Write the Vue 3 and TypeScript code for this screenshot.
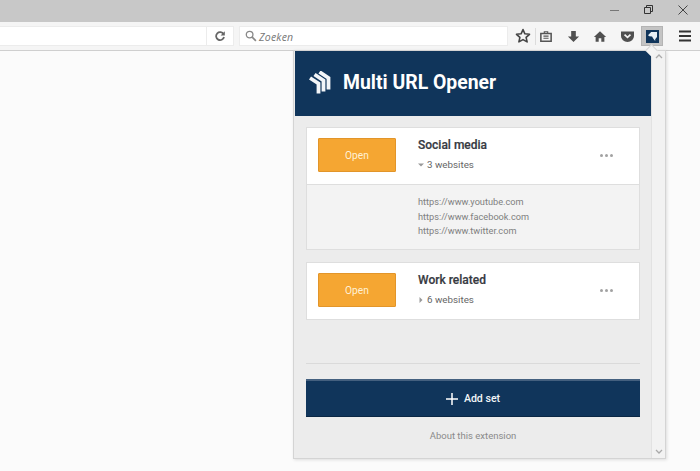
<script setup lang="ts">
interface UrlSet { name: string; count: number; open: boolean; urls: string[] }
const sets: UrlSet[] = [
  { name: 'Social media', count: 3, open: true, urls: ['https://www.youtube.com', 'https://www.facebook.com', 'https://www.twitter.com'] },
  { name: 'Work related', count: 6, open: false, urls: [] },
]
</script>

<template>
  <div class="window">
    <div class="titlebar">
      <svg class="win" width="12" height="12" viewBox="0 0 12 12"><path d="M1 6.500h9" stroke="#777" stroke-width="1" fill="none" /></svg>
      <svg class="win" width="12" height="12" viewBox="0 0 12 12"><path d="M1.500 3.500h6v6h-6zM3.500 3.500v-2h6v6h-2" stroke="#333" stroke-width="1" fill="none" /></svg>
      <svg class="win last" width="12" height="12" viewBox="0 0 12 12"><path d="M1.500 1.500l9 9M10.500 1.500l-9 9" stroke="#444" stroke-width="1" fill="none" /></svg>
    </div>
    <div class="toolbar">
      <div class="address">
        <span class="reload-box">
          <svg width="12" height="12" viewBox="0 0 12 12"><path d="M9.600 4.200A4 4 0 1 0 10 7" stroke="#666" stroke-width="1.800" fill="none" /><path d="M10.800 1.200v4.200H6.600z" fill="#666" /></svg>
        </span>
      </div>
      <div class="search">
        <svg width="12" height="12" viewBox="0 0 13 13"><circle cx="5" cy="5" r="3.600" stroke="#888" stroke-width="1.400" fill="none" /><path d="M7.800 7.800l4 4" stroke="#888" stroke-width="1.800" /></svg>
        <span class="placeholder">Zoeken</span>
      </div>
      <div class="tools">
        <svg class="star" width="16" height="16" viewBox="0 0 16 16"><path d="M8 1.600l1.900 4.200 4.600.5-3.400 3.100 1 4.500L8 11.600l-4.100 2.300 1-4.500L1.500 6.300l4.600-.5z" stroke="#444" stroke-width="1.600" fill="none" stroke-linejoin="round" /></svg>
        <span class="sep"></span>
        <svg class="clip" width="12" height="13" viewBox="0 0 14 14"><path d="M1 3.500h12v9H1z" stroke="#555" stroke-width="1.800" fill="none" /><path d="M5 3V1.500h4V3" stroke="#555" stroke-width="1.300" fill="none" /><path d="M4 6.500h6M4 9h6" stroke="#555" stroke-width="1.300" /></svg>
        <svg class="down" width="13" height="13" viewBox="0 0 14 14"><path d="M4.500 1h5v6h3.500L7 13 1 7h3.500z" fill="#505050" /></svg>
        <svg class="home" width="14" height="13" viewBox="0 0 16 14"><path d="M8 1L1 7.500h2V13h3.500V9h3v4H13V7.500h2z" fill="#505050" /></svg>
        <svg class="pocket" width="15" height="13" viewBox="0 0 16 14"><path d="M1 1.500h14v5a7 6.500 0 0 1-14 0z" fill="#505050" /><path d="M4.800 5L8 8l3.200-3" stroke="#f5f5f5" stroke-width="1.800" fill="none" /></svg>
        <span class="ext-btn">
          <span class="ext-icon">
            <svg width="9" height="9" viewBox="0 0 10 10"><path d="M0 3.500L3.500 0H10v5.500L8 8v2L6 7.500 4.500 5 1.500 4.800z" fill="#e8f0f6" /></svg>
          </span>
        </span>
        <svg class="menu" width="14" height="12" viewBox="0 0 14 12"><path d="M1 1.500h12M1 6h12M1 10.500h12" stroke="#333" stroke-width="2" /></svg>
      </div>
    </div>
    <div class="page"></div>

    <div class="popup">
      <span class="notch"></span>
      <div class="main">
        <header class="header">
          <svg class="logo" width="22" height="24" viewBox="0 0 22 24">
            <path d="M1 7L9.500 12.500V22.500" stroke="#f2f5f8" stroke-width="3.800" fill="none" />
            <path d="M5.500 3.500L14.500 9.500V20.500" stroke="#f2f5f8" stroke-width="3.800" fill="none" />
            <path d="M10.500 1L19.500 7V18.500" stroke="#f2f5f8" stroke-width="3.800" fill="none" />
          </svg>
          <h1>Multi URL Opener</h1>
        </header>
        <div class="body">
          <section v-for="set in sets" :key="set.name" class="card">
            <div class="card-head">
              <button class="open">Open</button>
              <div class="info">
                <div class="name">{{ set.name }}</div>
                <div class="count">
                  <svg width="6" height="6" viewBox="0 0 6 6">
                    <path v-if="set.open" d="M0 1.500h6L3 4.500z" fill="#999" />
                    <path v-else d="M1.500 0v6L4.500 3z" fill="#999" />
                  </svg>
                  <span>{{ set.count }} websites</span>
                </div>
              </div>
              <div class="dots"><i></i><i></i><i></i></div>
            </div>
            <div v-if="set.open" class="urls">
              <div v-for="u in set.urls" :key="u" class="url">{{ u }}</div>
            </div>
          </section>
          <div class="spacer"></div>
          <div class="rule"></div>
          <button class="add">
            <svg width="12" height="12" viewBox="0 0 12 12"><path d="M6 0v12M0 6h12" stroke="#fff" stroke-width="1.500" /></svg>
            <span>Add set</span>
          </button>
          <div class="about">About this extension</div>
        </div>
      </div>
      <div class="scrollbar">
        <svg width="8" height="5" viewBox="0 0 8 5"><path d="M1 4l3-3 3 3" stroke="#aaa" stroke-width="1.300" fill="none" /></svg>
        <svg width="8" height="5" viewBox="0 0 8 5"><path d="M1 1l3 3 3-3" stroke="#aaa" stroke-width="1.300" fill="none" /></svg>
      </div>
    </div>
  </div>
</template>

<style>
html, body { margin: 0; padding: 0; background: #fbfbfb; overflow: hidden; }
</style>

<style scoped>
.window {
  position: relative;
  width: 700px;
  height: 471px;
  overflow: hidden;
  display: flex;
  flex-direction: column;
  font-family: Roboto, "Liberation Sans", sans-serif;
  background: #fbfbfb;
}
.titlebar {
  height: 22px;
  background: #c8c8c8;
  display: flex;
  align-items: flex-start;
  justify-content: flex-end;
  padding-top: 4px;
  box-sizing: border-box;
  gap: 22px;
  padding-right: 11px;
}
.win { display: block; }
.toolbar {
  height: 29px;
  box-sizing: border-box;
  background: #f5f5f5;
  border-bottom: 1px solid #cfcfcf;
  display: flex;
  align-items: flex-start;
  padding-top: 4px;
}
.address {
  width: 234px;
  height: 20px;
  box-sizing: border-box;
  background: #fff;
  border: 1px solid #ececec;
  border-left: 0;
  display: flex;
  justify-content: flex-end;
}
.reload-box {
  width: 26px;
  border-left: 1px solid #ececec;
  display: flex;
  align-items: center;
  justify-content: center;
}
.search {
  margin-left: 5px;
  width: 269px;
  height: 20px;
  box-sizing: border-box;
  background: #fff;
  border: 1px solid #ececec;
  display: flex;
  align-items: center;
  padding-left: 5px;
  gap: 2px;
}
.placeholder {
  font-family: "Open Sans", sans-serif;
  font-style: italic;
  font-size: 10.500px;
  letter-spacing: 0.2px;
  color: #777;
  padding-top: 1px;
}
.tools {
  flex: 1;
  position: relative;
  height: 20px;
  display: flex;
  align-items: center;
}
.star { margin-left: 7px; }
.sep { width: 1px; height: 17px; background: #dcdcdc; margin-left: 4px; }
.clip { margin-left: 4px; }
.down { margin-left: 15px; }
.home { margin-left: 13px; }
.pocket { margin-left: 13px; }
.ext-btn {
  margin-left: 6px;
  width: 22px;
  height: 20px;
  box-sizing: border-box;
  background: #c4c4c4;
  border: 1px solid #b4b4b4;
  display: flex;
  align-items: center;
  justify-content: center;
}
.ext-icon {
  width: 13px;
  height: 13px;
  background: #10355b;
  display: flex;
  align-items: center;
  justify-content: center;
}
.menu { margin-left: 15px; }
.page { flex: 1; background: #fbfbfb; }

.popup {
  position: absolute;
  left: 293px;
  top: 50px;
  width: 373px;
  height: 409px;
  box-sizing: border-box;
  background: #ececec;
  border: 1px solid #d4d4d4;
  box-shadow: 1px 1px 3px rgba(0, 0, 0, 0.12);
  display: flex;
  padding-left: 1px;
}
.notch {
  position: absolute;
  left: 353px;
  top: -5px;
  width: 8px;
  height: 8px;
  background: #f4f4f4;
  border-left: 1px solid #d4d4d4;
  border-top: 1px solid #d4d4d4;
  transform: rotate(45deg);
}
.main {
  width: 357px;
  display: flex;
  flex-direction: column;
}
.header {
  height: 65px;
  background: #10355b;
  display: flex;
  align-items: center;
  padding-left: 14px;
  gap: 12px;
  flex: none;
}
.logo { margin-top: -2px; }
.header h1 {
  margin: 0;
  font-size: 19.400px;
  font-weight: 700;
  color: #fff;
  position: relative;
  top: -1px;
}
.body {
  flex: 1;
  padding: 11px 11px 0;
  display: flex;
  flex-direction: column;
  gap: 12px;
}
.card {
  background: #f3f3f3;
  border: 1px solid #dedede;
  flex: none;
}
.card-head {
  height: 56px;
  box-sizing: border-box;
  padding-bottom: 2px;
  background: #fff;
  display: flex;
  align-items: center;
  padding-left: 11px;
}
.open {
  width: 78px;
  height: 34px;
  padding: 0;
  background: #f5a632;
  border: 1px solid #e2952a;
  border-radius: 1px;
  color: #fff1d6;
  font-family: inherit;
  font-size: 10.200px;
}
.info {
  margin-left: 22px;
  width: 182px;
  position: relative;
  top: -1px;
}
.name {
  font-size: 12px;
  font-weight: 500;
  -webkit-text-stroke: 0.2px #373a42;
  color: #373a42;
  line-height: 16px;
}
.count {
  margin-top: 5px;
  display: flex;
  align-items: center;
  gap: 3px;
  font-size: 9.800px;
  line-height: 14px;
  color: #666;
}
.dots { display: flex; gap: 2px; margin-left: 0; }
.dots i {
  width: 3px;
  height: 3px;
  border-radius: 50%;
  background: #a2a2a2;
  display: block;
}
.urls {
  border-top: 1px solid #dedede;
  height: 65px;
  box-sizing: border-box;
  padding: 10px 0 0 111px;
}
.url {
  font-size: 9.200px;
  line-height: 14.500px;
  color: #808080;
}
.spacer { height: 19px; flex: none; }
.rule { height: 1px; background: #dadada; flex: none; }
.add {
  margin-top: 3px;
  height: 38px;
  flex: none;
  padding: 0;
  border: 0;
  border-top: 2px solid #44607f;
  border-bottom: 1px solid #0a2744;
  background: #10355b;
  color: #f2f5f8;
  display: flex;
  align-items: center;
  justify-content: center;
  gap: 6px;
  font-family: inherit;
  font-size: 10.600px;
  font-weight: 500;
}
.about {
  text-align: center;
  font-size: 9.500px;
  color: #8a8a8a;
  line-height: 14px;
}
.scrollbar {
  width: 14px;
  border-left: 1px solid #e2e2e2;
  background: #f2f2f2;
  display: flex;
  flex-direction: column;
  justify-content: space-between;
  align-items: center;
  padding: 3px 0 4px;
  box-sizing: border-box;
}
</style>
